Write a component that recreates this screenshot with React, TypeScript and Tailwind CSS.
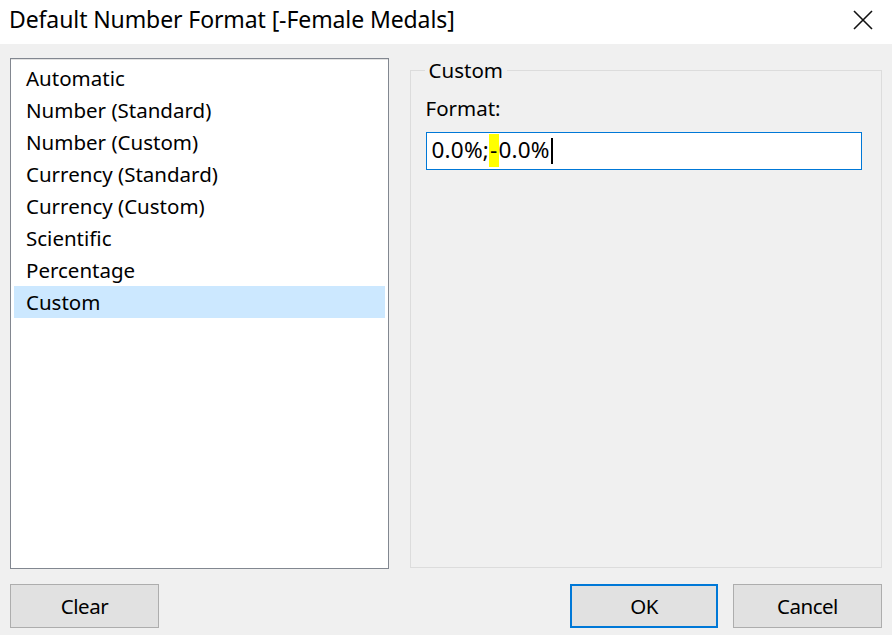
import { useState } from "react";

const formats = [
  "Automatic",
  "Number (Standard)",
  "Number (Custom)",
  "Currency (Standard)",
  "Currency (Custom)",
  "Scientific",
  "Percentage",
  "Custom",
];

export default function App() {
  const [selected, setSelected] = useState("Custom");

  return (
    <div
      className="w-[892px] h-[635px] flex flex-col bg-[#f0f0f0] text-black overflow-hidden"
      style={{ fontFamily: '"Noto Sans", "Open Sans", sans-serif' }}
    >
      {/* Title bar */}
      <div className="h-[44px] bg-white flex items-center justify-between pl-[9px] pr-[18px]">
        <span className="text-[23px] leading-none tracking-[-0.1px] mb-[6px]">
          Default Number Format [-Female Medals]
        </span>
        <svg width="22" height="22" viewBox="0 0 22 22" className="mb-[4px]">
          <path d="M2 2 L20 20 M20 2 L2 20" stroke="#111" strokeWidth="1.6" />
        </svg>
      </div>

      {/* Body */}
      <div className="flex-1 flex flex-col px-[10px] pt-[14px]">
        <div className="flex gap-[21px]">
          {/* Format list */}
          <div className="w-[379px] h-[511px] bg-white border border-[#828790] p-[3px] shadow-[inset_0_1px_0_#e3e3e3]">
            {formats.map((f) => (
              <div
                key={f}
                onClick={() => setSelected(f)}
                className={`h-[32px] flex items-center pl-[12px] text-[20.5px] leading-none ${
                  selected === f ? "bg-[#cce8ff]" : ""
                }`}
              >
                {f}
              </div>
            ))}
          </div>

          {/* Custom group */}
          <fieldset className="w-[473px] h-[511px] border border-[#dcdcdc] px-[15px] -mt-[1px]">
            <legend className="-ml-[1px] px-[4px] text-[20.5px] leading-[26px]">
              Custom
            </legend>
            <div className="text-[20.5px] leading-none mt-[15px]">Format:</div>
            <div className="mt-[13px] w-[436px] h-[38px] bg-white border border-[#0078d7] flex items-center pl-[5px] text-[22.5px] tracking-[0.2px] leading-none">
              <span>0.0%;</span>
              <span className="bg-[#ffff00] h-[33px] flex items-center px-[1px]">-</span>
              <span>0.0%</span>
              <span className="w-[2px] h-[26px] bg-black ml-[1px]" />
            </div>
          </fieldset>
        </div>

        {/* Buttons */}
        <div className="flex mt-[15px]">
          <button className="w-[149px] h-[44px] bg-[#e1e1e1] border border-[#adadad] text-[20.5px] tracking-[-0.5px]">
            Clear
          </button>
          <div className="flex-1" />
          <button className="w-[148px] h-[44px] bg-[#e1e1e1] border-2 border-[#0078d7] text-[20.5px] tracking-[-0.5px]">
            OK
          </button>
          <button className="w-[149px] h-[44px] ml-[15px] bg-[#e1e1e1] border border-[#adadad] text-[20.5px] tracking-[-0.5px]">
            Cancel
          </button>
        </div>
      </div>
    </div>
  );
}
